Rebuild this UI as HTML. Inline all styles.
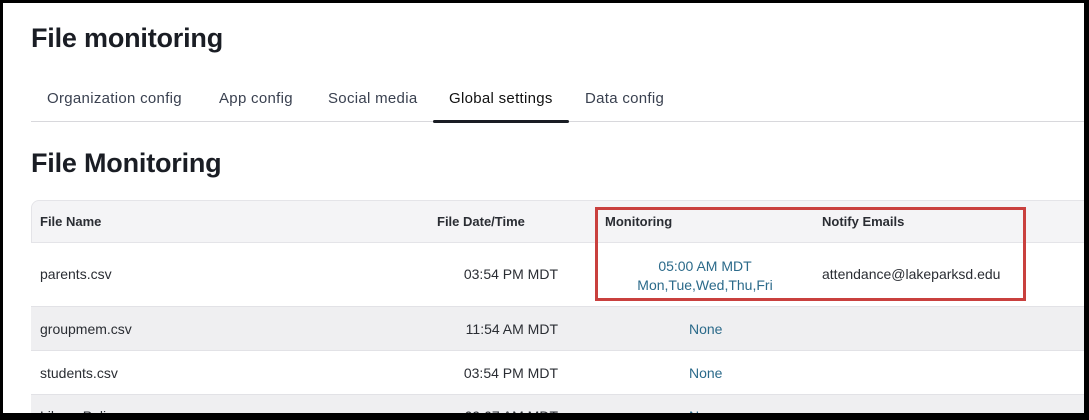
<!DOCTYPE html>
<html><head><style>
*{margin:0;padding:0;box-sizing:border-box}
body{width:1089px;height:420px;background:#000;position:relative;overflow:hidden;font-family:"Liberation Sans",sans-serif;color:#1a1d24}
.page{position:absolute;left:3px;top:3px;width:1081px;height:410px;background:#fff;overflow:hidden}
.abs{position:absolute;white-space:nowrap}
h1{position:absolute;left:28px;top:20px;font-size:27px;font-weight:bold;letter-spacing:-0.2px}
.tab{position:absolute;top:87px;font-size:15px;color:#3a4150;letter-spacing:0.3px}
.row{position:absolute;left:28px;width:1060px}
.t{position:absolute;font-size:14px;color:#2a2d33}
.b{color:#2b6a8a}
</style></head><body>
<div class="page">
<h1>File monitoring</h1>
<div class="tab" style="left:44px">Organization config</div>
<div class="tab" style="left:216px">App config</div>
<div class="tab" style="left:325px">Social media</div>
<div class="tab" style="left:446px;color:#111">Global settings</div>
<div class="tab" style="left:582px">Data config</div>
<div class="abs" style="left:28px;top:118px;width:1060px;height:1px;background:#d8d8dc"></div>
<div class="abs" style="left:430px;top:117px;width:136px;height:3px;background:#1a1d24;border-radius:2px"></div>
<h1 style="top:145px">File Monitoring</h1>

<div class="row" style="top:197px;height:43px;background:#f4f4f6;border:1px solid #e4e4e8;border-radius:8px 0 0 0"></div>
<div class="row" style="top:240px;height:64px;background:#fff;border-bottom:1px solid #e2e2e6"></div>
<div class="row" style="top:304px;height:44px;background:#efeff1;border-bottom:1px solid #e2e2e6"></div>
<div class="row" style="top:348px;height:44px;background:#fff;border-bottom:1px solid #e2e2e6"></div>
<div class="row" style="top:392px;height:30px;background:#efeff1"></div>

<div class="t" style="left:37px;top:211px;font-weight:bold;font-size:13px">File Name</div>
<div class="t" style="left:434px;top:211px;font-weight:bold;font-size:13px">File Date/Time</div>
<div class="t" style="left:602px;top:211px;font-weight:bold;font-size:13px">Monitoring</div>
<div class="t" style="left:819px;top:211px;font-weight:bold;font-size:13px">Notify Emails</div>

<div class="t" style="left:37px;top:263px">parents.csv</div>
<div class="t" style="left:400px;width:155px;text-align:right;top:263px">03:54 PM MDT</div>
<div class="t b" style="left:602px;width:200px;text-align:center;top:254px;line-height:19px">05:00 AM MDT<br>Mon,Tue,Wed,Thu,Fri</div>
<div class="t" style="left:819px;top:263px">attendance@lakeparksd.edu</div>

<div class="t" style="left:37px;top:318px">groupmem.csv</div>
<div class="t" style="left:400px;width:155px;text-align:right;top:318px">11:54 AM MDT</div>
<div class="t b" style="left:686px;top:318px">None</div>

<div class="t" style="left:37px;top:362px">students.csv</div>
<div class="t" style="left:400px;width:155px;text-align:right;top:362px">03:54 PM MDT</div>
<div class="t b" style="left:686px;top:362px">None</div>

<div class="t" style="left:37px;top:405px">LibraryPolicy.csv</div>
<div class="t" style="left:400px;width:155px;text-align:right;top:405px">09:07 AM MDT</div>
<div class="t b" style="left:686px;top:405px">None</div>

<div class="abs" style="left:592px;top:204px;width:431px;height:94px;border:3px solid #c9403e"></div>
</div>
</body></html>
